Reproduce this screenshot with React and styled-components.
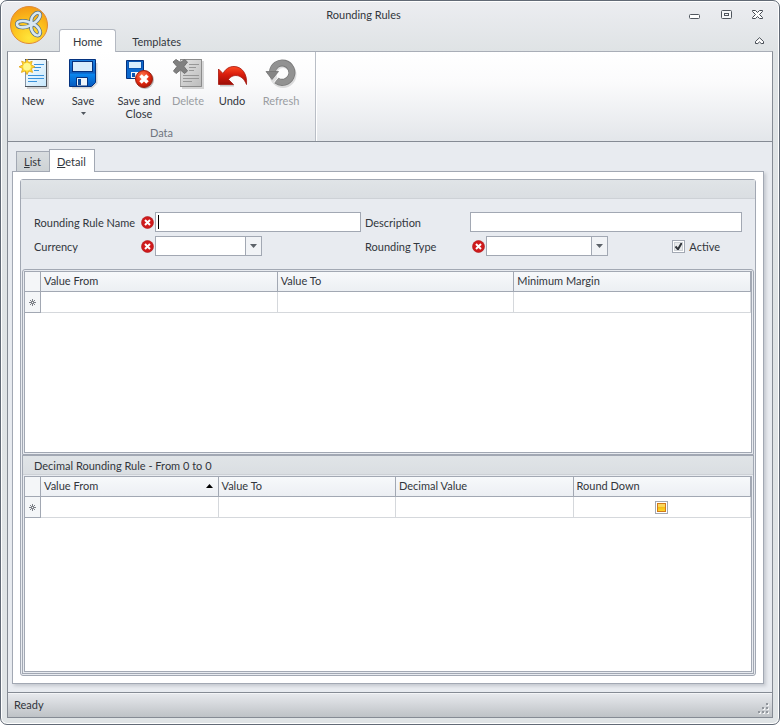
import React from 'react';
import styled, { createGlobalStyle } from 'styled-components';

const line = '#a2a8b3';
const softLine = '#d5d8dc';
const panel = '#e8ebf0';

const GlobalStyle = createGlobalStyle`
  * {
    box-sizing: border-box;
  }
  body {
    margin: 0;
    background: #fff;
    font-family: Lato, 'Open Sans', sans-serif;
    font-size: 11px;
    line-height: 13px;
    color: #32363c;
  }
  button, input, select {
    font: inherit;
    color: inherit;
  }
`;

const Window = styled.div`
  display: flex;
  flex-direction: column;
  min-height: 100vh;
  padding: 0 6px 6px 6px;
  border: 1px solid #626a76;
  border-radius: 7px;
  background: linear-gradient(#ecedf1, #dfe3e5 50px, #e0e4e6);
  box-shadow: inset 0 0 0 1px #fff;
`;

const Header = styled.header`
  position: relative;
  height: 50px;
`;

const TitleRow = styled.div`
  display: flex;
  align-items: center;
  height: 27px;
  padding-left: 53px;
`;

const Title = styled.h1`
  flex: 1;
  margin: 0;
  font-size: 11px;
  font-weight: 400;
  text-align: center;
`;

const WindowButtons = styled.div`
  display: flex;
  justify-content: space-between;
  width: 74px;
  margin: 0 10px 0 22px;
`;

const IconButton = styled.button`
  display: flex;
  padding: 0;
  border: 0;
  background: none;
`;

const AppButton = styled(IconButton)`
  position: absolute;
  top: 3px;
  left: 2px;
`;

const RibbonTabs = styled.nav`
  display: flex;
  align-items: center;
  height: 23px;
  margin-top: 1px;
  padding: 0 9px 0 52px;
`;

const RibbonTab = styled.button`
  position: relative;
  z-index: 1;
  height: 23px;
  padding: 0 13px;
  border: 1px solid ${props => (props.$active ? '#b4b9c2' : 'transparent')};
  border-bottom: 0;
  border-radius: 3px 3px 0 0;
  background: ${props => (props.$active ? '#fff' : 'none')};
  margin-right: 2px;
`;

const Collapse = styled(IconButton)`
  margin-left: auto;
`;

const Client = styled.div`
  flex: 1;
  display: flex;
  flex-direction: column;
  border: 1px solid #858b94;
  border-top-color: #a9aeb7;
  background: ${panel};
`;

const Ribbon = styled.div`
  display: flex;
  height: 90px;
  border-bottom: 1px solid #858b94;
  background: linear-gradient(#fff, #fbfbfc 30px, #e3e6ea);
`;

const RibbonGroup = styled.section`
  display: flex;
  flex-direction: column;
  justify-content: space-between;
  padding: 5px 11px 2px 0;
  border-right: 1px solid #b9bec6;
  box-shadow: 1px 0 0 #fff;
`;

const RibbonItems = styled.div`
  display: flex;
  align-items: flex-start;
`;

const GroupTitle = styled.div`
  padding-left: 11px;
  color: #6f7580;
  text-align: center;
`;

const RibbonButton = styled.button`
  display: flex;
  flex-direction: column;
  align-items: center;
  width: ${props => props.$width}px;
  padding: 0;
  border: 0;
  background: none;
  white-space: nowrap;

  svg {
    flex: none;
  }
  span {
    margin-top: 5px;
  }
  &:disabled {
    color: #9a9da2;
  }
`;

const Content = styled.main`
  flex: 1;
  display: flex;
  flex-direction: column;
  padding: 7px 8px 8px 4px;
`;

const Tabs = styled.div`
  display: flex;
  align-items: flex-end;
  padding-left: 4px;
`;

const Tab = styled.button`
  height: ${props => (props.$active ? 23 : 20)}px;
  padding: 0 8px 0 7px;
  margin: 0 0 ${props => (props.$active ? -1 : 0)}px ${props => (props.$active ? -1 : 0)}px;
  border: 1px solid ${line};
  border-bottom: 0;
  background: ${props => (props.$active ? '#fff' : 'linear-gradient(#d9dde0, #cdd2d5)')};
  position: relative;
`;

const TabPage = styled.div`
  flex: 1;
  display: flex;
  padding: 7px;
  border: 1px solid ${line};
  background: #fff;
  box-shadow: 2px 2px 3px rgba(90, 98, 112, 0.25);
`;

const Group = styled.div`
  flex: 1;
  display: flex;
  flex-direction: column;
  min-width: 0;
  padding-bottom: 1px;
  border: 1px solid ${line};
  border-radius: 3px;
  background: ${panel};
`;

const Caption = styled.div`
  height: 19px;
  padding: 3px 11px;
  border-bottom: 1px solid #cdd1d6;
  background: linear-gradient(#e0e4e7, #dadee2);
`;

const Fields = styled.form`
  display: grid;
  grid-template-columns: 106px minmax(0, 13fr) 109px minmax(0, 16fr);
  grid-auto-rows: 20px;
  row-gap: 4px;
  align-items: center;
  padding: 13px;
`;

const Label = styled.label`
  padding-left: ${props => (props.$second ? 4 : 0)}px;
  white-space: nowrap;
`;

const Field = styled.div`
  display: flex;
  align-items: center;
  gap: 1px;
  padding-left: ${props => (props.$inset ? 1 : 0)}px;
`;

const TextBox = styled.input`
  flex: 1;
  min-width: 0;
  height: 20px;
  padding: 0 3px;
  border: 1px solid ${line};
  border-radius: 0;
  outline: 0;
  background: ${props =>
    props.$current ? 'linear-gradient(#000, #000) 2px 2px / 1px 14px no-repeat #fff' : '#fff'};
`;

const Combo = styled.div`
  position: relative;
  width: ${props => props.$width}px;

  select {
    display: block;
    width: 100%;
    height: 20px;
    padding: 0 18px 0 3px;
    border: 1px solid ${line};
    border-radius: 0;
    background: #fff;
    appearance: none;
  }
  svg {
    position: absolute;
    top: 1px;
    right: 1px;
    pointer-events: none;
  }
`;

const CheckLabel = styled.label`
  display: flex;
  align-items: center;
  gap: 4px;
  margin: 0 22px 0 auto;
`;

const CheckBox = styled.input`
  appearance: none;
  display: block;
  width: 13px;
  height: 13px;
  margin: 0;
  border: 1px solid ${line};
  box-shadow: inset 0 0 0 1px #fff, inset 0 0 0 2px #ccd0d5;
  background: #e9ebed;

  &:checked {
    background: url("data:image/svg+xml,%3Csvg xmlns='http://www.w3.org/2000/svg' width='11' height='11'%3E%3Cpath d='M2.5 5.5L5 8.3L8.8 1.8' fill='none' stroke='%2333373c' stroke-width='2'/%3E%3C/svg%3E") #e9ebed;
  }
  &:indeterminate {
    border-color: ${line};
    background: linear-gradient(#fbd75d 40%, #f5bf16 50%, #ffe23a);
    box-shadow: inset 0 0 0 1px #fff, inset 0 0 0 2px #cf7a1c;
  }
`;

const Section = styled.section`
  flex: ${props => props.$grow} 0 0;
  display: flex;
  flex-direction: column;
  margin: 0 1px;
  border: 1px solid ${line};
  border-radius: ${props => (props.$first ? '3px 3px 0 0' : 0)};
`;

const GridBox = styled.div`
  flex: 1;
  margin: 1px;
  border: 1px solid ${line};
  background: #fff;
`;

const Table = styled.table`
  width: 100%;
  table-layout: fixed;
  border-collapse: separate;
  border-spacing: 0;

  th, td {
    padding: 0 3px;
    border-right: 1px solid ${softLine};
    border-bottom: 1px solid ${softLine};
    font-weight: 400;
    text-align: left;
  }
  thead th, thead td {
    height: 20px;
    border-color: ${line};
    background: linear-gradient(#f7f9fb, #eceff3);
  }
  th:not(:last-child) {
    width: calc((100% - 18px) / ${props => props.$count});
  }
  td {
    height: 21px;
  }
  td:first-child {
    width: 16px;
    padding: 0;
    border-color: ${line};
    background: #f4f6f8;
  }
  tbody svg, tbody input {
    display: block;
    margin: 0 auto;
  }
`;

const HeadCell = styled.div`
  display: flex;
  align-items: center;
  justify-content: space-between;
  padding: 0 2px 2px 0;
`;

const StatusBar = styled.footer`
  display: flex;
  align-items: center;
  justify-content: space-between;
  height: 25px;
  padding: 0 2px 1px 6px;
  border-top: 1px solid #858b94;
  background: linear-gradient(#e8eaee, #bec2c6);
  box-shadow: inset 0 1px 0 #f4f5f7;

  svg {
    align-self: flex-end;
  }
`;

const Logo = () => (
  <svg width="40" height="42" viewBox="0 0 40 42">
    <defs>
      <radialGradient id="logoFill" cx="50%" cy="85%" r="85%">
        <stop offset="0" stopColor="#ffe53a" />
        <stop offset="0.5" stopColor="#fdc51f" />
        <stop offset="1" stopColor="#f39a14" />
      </radialGradient>
    </defs>
    <circle cx="20" cy="21" r="18.5" fill="url(#logoFill)" stroke="#e08a35" />
    <g fill="none" strokeLinejoin="round">
      <g stroke="#536f83" strokeWidth="4">
        <path d="M23 20C17 15 8 17 8 20C8 24 17 25 23 20Z" />
        <path d="M23 20C20 13 27 8 30 9C33 11 29 18 23 20Z" />
        <path d="M23 20C29 21 33 28 30 31C27 33 20 27 23 20Z" />
      </g>
      <g stroke="#d8e7f1" strokeWidth="2.6">
        <path d="M23 20C17 15 8 17 8 20C8 24 17 25 23 20Z" />
        <path d="M23 20C20 13 27 8 30 9C33 11 29 18 23 20Z" />
        <path d="M23 20C29 21 33 28 30 31C27 33 20 27 23 20Z" />
      </g>
    </g>
  </svg>
);

const MinimizeIcon = () => (
  <svg width="11" height="11" fill="#fff" stroke="#50565e">
    <rect x="0.5" y="5.5" width="10" height="4" rx="1" />
  </svg>
);

const MaximizeIcon = () => (
  <svg width="11" height="11" fill="#f7f8f9" stroke="#50565e">
    <rect x="0.5" y="1.5" width="10" height="8" rx="1" />
    <rect x="3.5" y="4.5" width="4" height="2" />
  </svg>
);

const CloseIcon = () => (
  <svg width="11" height="11" fill="#fff" stroke="#454b53">
    <path d="M0.5 1.5H3.5L5.5 3.5L7.5 1.5H10.5V2.5L7.5 5.5L10.5 8.5V9.5H7.5L5.5 7.5L3.5 9.5H0.5V8.5L3.5 5.5L0.5 2.5Z" />
  </svg>
);

const CollapseIcon = () => (
  <svg width="9" height="8" fill="#fff" stroke="#454b53">
    <path d="M4.5 0.7L8.5 4.5V6.5H6.2L4.5 4.9L2.8 6.5H0.5V4.5Z" />
  </svg>
);

const Page = ({ id, from, to, stroke, edge, bars }) => (
  <>
    <defs>
      <linearGradient id={id} x1="0" y1="0" x2="1" y2="1">
        <stop offset="0" stopColor={from} />
        <stop offset="1" stopColor={to} />
      </linearGradient>
    </defs>
    <path d="M10 31H31V4" fill="none" stroke="#000" strokeOpacity="0.15" strokeWidth="2" />
    <rect x="8.5" y="2.5" width="21" height="27" fill={`url(#${id})`} stroke={edge} />
    <path d="M8 2.500H29.500V29.500H8" fill="none" stroke={stroke} />
    <path d="M17 7.5H27M17 10.5H24M17 13.5H22M11 18.5H27M11 21.5H27M11 24.5H20" stroke={bars} />
  </>
);

const NewIcon = () => (
  <svg width="32" height="32">
    <Page id="newPage" from="#ffffff" to="#c5e6fb" stroke="#4b525b" edge="#8494a5" bars="#3a93dc" />
    <path
      d="M10 2L11.6 5.6L15.2 4.2L14 7.8L18 9.8L14.3 11.5L15.6 15.4L11.8 14L10 17.6L8.2 14L4.4 15.4L5.7 11.5L2 9.8L6 7.8L4.6 4.2L8.4 5.6Z"
      fill="#ffd92e"
      stroke="#e2a51a"
      strokeWidth="0.8"
    />
    <circle cx="10" cy="9.8" r="3.8" fill="#fff88c" />
  </svg>
);

const SaveIcon = () => (
  <svg width="32" height="32">
    <defs>
      <linearGradient id="diskFill" x1="0" y1="0" x2="0" y2="1">
        <stop offset="0" stopColor="#1b7fe0" />
        <stop offset="0.5" stopColor="#0e62c4" />
        <stop offset="0.55" stopColor="#0a86ee" />
        <stop offset="1" stopColor="#0759bd" />
      </linearGradient>
    </defs>
    <path d="M5 30.5H25L29.5 26V6" fill="none" stroke="#000" strokeOpacity="0.15" strokeWidth="2" />
    <path d="M2.5 2.5H28.5V25.5L24.5 29.5H2.5Z" fill="url(#diskFill)" stroke="#04327f" />
    <rect x="5.5" y="4.5" width="20" height="10" fill="#d9edfc" stroke="#04327f" />
    <path d="M9.5 29V20.5H20.5V29Z" fill="#eef5fb" stroke="#04327f" />
    <rect x="11" y="22" width="3" height="6" fill="#0b4a9c" />
  </svg>
);

const SaveCloseIcon = () => (
  <svg width="32" height="32">
    <defs>
      <radialGradient id="closeBall" cx="40%" cy="30%" r="75%">
        <stop offset="0" stopColor="#ff7a50" />
        <stop offset="0.6" stopColor="#e2280f" />
        <stop offset="1" stopColor="#a31204" />
      </radialGradient>
    </defs>
    <path d="M3.5 3.5H20.5V21.5H3.5Z" fill="#0c69cf" stroke="#04327f" />
    <rect x="5.5" y="4.5" width="13" height="7" fill="#d9edfc" stroke="#0a55b0" />
    <rect x="8" y="15" width="9" height="6" fill="#eef5fb" />
    <rect x="9" y="16" width="3" height="4" fill="#0b55b0" />
    <circle cx="22" cy="23" r="9" fill="#000" fillOpacity="0.25" />
    <circle cx="21" cy="22" r="8.5" fill="url(#closeBall)" stroke="#9c2112" />
    <path d="M17.5 18.5L24.5 25.5M24.5 18.5L17.5 25.5" stroke="#fff" strokeWidth="3.5" />
  </svg>
);

const DeleteIcon = () => (
  <svg width="32" height="32">
    <Page id="deletePage" from="#e3e3e3" to="#bcbcbc" stroke="#8c8c8c" edge="#a6a6a6" bars="#979797" />
    <path
      d="M1 5L4 2.5L8.5 5.5L12.5 2.5L15.5 5L12 9.5L15.5 14L12.5 16.5L8.5 13L4 16.5L1.5 14L5 9.5Z"
      fill="#808080"
      stroke="#727272"
    />
  </svg>
);

const UndoIcon = () => (
  <svg width="32" height="32">
    <defs>
      <linearGradient id="undoFill" x1="0" y1="0" x2="0" y2="1">
        <stop offset="0" stopColor="#ff4a22" />
        <stop offset="0.45" stopColor="#d81d0d" />
        <stop offset="1" stopColor="#9c0d06" />
      </linearGradient>
    </defs>
    <path d="M4 28.5H18" stroke="#000" strokeOpacity="0.2" strokeWidth="2" />
    <path
      d="M2.5 12V27.5H17.5L12.5 22.5C16 17 26 16 30.5 27.5C31.5 17 26 9.5 18 9.5C13 9.5 9.5 12 7 16.5Z"
      fill="url(#undoFill)"
      stroke="#a3150c"
      strokeWidth="0.8"
    />
  </svg>
);

const RefreshIcon = () => (
  <svg width="32" height="32" fill="none">
    <circle cx="18" cy="17.5" r="10" stroke="#000" strokeOpacity="0.12" strokeWidth="7" />
    <path d="M7.5 15A9.7 9.7 0 1 1 11.5 23.5" stroke="#7a7a7a" strokeWidth="7" />
    <path d="M7.5 15A9.7 9.7 0 1 1 11.5 23.5" stroke="#929292" strokeWidth="5.4" />
    <path d="M1 14.5H13.5L7 22.5Z" fill="#858585" stroke="#747474" strokeWidth="0.8" />
    <path d="M8.5 25.5L14 20" stroke="#eee" />
  </svg>
);

const ErrorIcon = () => (
  <svg width="14" height="13" style={{ flex: 'none' }}>
    <circle cx="7.5" cy="6.5" r="6" fill="#cf1a1c" stroke="#b01618" strokeWidth="0.6" />
    <path d="M5 4L10 9M10 4L5 9" stroke="#fff" strokeWidth="2" />
  </svg>
);

const DropIcon = () => (
  <svg width="16" height="18">
    <rect width="16" height="18" fill="#f1f3f6" />
    <path d="M0.5 0V18" stroke={line} />
    <path d="M5 7H12L8.5 11Z" fill="#5c6269" />
  </svg>
);

const NewRowIcon = () => (
  <svg width="9" height="9" stroke="#6f747b" strokeWidth="0.9">
    <path d="M4.5 1V8M1 4.5H8M2 2L7 7M7 2L2 7" />
    <circle cx="4.5" cy="4.5" r="1" fill="#fff" />
  </svg>
);

const GripIcon = () => (
  <svg width="12" height="14">
    {[[8, 1], [4, 5], [8, 5], [0, 9], [4, 9], [8, 9]].map(([x, y]) => (
      <g key={`${x}-${y}`}>
        <rect x={x + 1} y={y + 1} width="2" height="2" fill="#f3f4f5" />
        <rect x={x} y={y} width="2" height="2" fill="#91969c" />
      </g>
    ))}
  </svg>
);

const ComboBox = ({ id, width }) => (
  <Combo $width={width}>
    <select id={id} defaultValue="">
      <option value="" aria-label="None" />
    </select>
    <DropIcon />
  </Combo>
);

const Grid = ({ columns, sorted, check }) => (
  <GridBox>
    <Table $count={columns.length}>
      <thead>
        <tr>
          <td />
          {columns.map(name => (
            <th key={name} scope="col">
              <HeadCell>
                {name}
                {name === sorted && (
                  <svg width="7" height="4">
                    <path d="M0 4L3.5 0L7 4Z" />
                  </svg>
                )}
              </HeadCell>
            </th>
          ))}
        </tr>
      </thead>
      <tbody>
        <tr>
          <td><NewRowIcon /></td>
          {columns.map(name => (
            <td key={name}>
              {name === check && (
                <CheckBox
                  type="checkbox"
                  aria-label={name}
                  ref={box => {
                    if (box) box.indeterminate = true;
                  }}
                />
              )}
            </td>
          ))}
        </tr>
      </tbody>
    </Table>
  </GridBox>
);

const App = () => (
  <>
    <GlobalStyle />
    <Window>
      <Header>
        <AppButton aria-label="Menu"><Logo /></AppButton>
        <TitleRow>
          <Title>Rounding Rules</Title>
          <WindowButtons>
            <IconButton aria-label="Minimize"><MinimizeIcon /></IconButton>
            <IconButton aria-label="Maximize"><MaximizeIcon /></IconButton>
            <IconButton aria-label="Close"><CloseIcon /></IconButton>
          </WindowButtons>
        </TitleRow>
        <RibbonTabs>
          <RibbonTab $active>Home</RibbonTab>
          <RibbonTab>Templates</RibbonTab>
          <Collapse aria-label="Collapse ribbon"><CollapseIcon /></Collapse>
        </RibbonTabs>
      </Header>

      <Client>
        <Ribbon>
          <RibbonGroup>
            <RibbonItems>
              <RibbonButton $width={50}><NewIcon /><span>New</span></RibbonButton>
              <RibbonButton $width={50}>
                <SaveIcon />
                <span>Save</span>
                <svg width="5" height="10"><path d="M0 5H5L2.5 8Z" fill="#50565e" /></svg>
              </RibbonButton>
              <RibbonButton $width={62}>
                <SaveCloseIcon />
                <span>Save and<br />Close</span>
              </RibbonButton>
              <RibbonButton $width={36} disabled><DeleteIcon /><span>Delete</span></RibbonButton>
              <RibbonButton $width={52}><UndoIcon /><span>Undo</span></RibbonButton>
              <RibbonButton $width={46} disabled><RefreshIcon /><span>Refresh</span></RibbonButton>
            </RibbonItems>
            <GroupTitle>Data</GroupTitle>
          </RibbonGroup>
        </Ribbon>

        <Content>
          <Tabs>
            <Tab><u>L</u>ist</Tab>
            <Tab $active><u>D</u>etail</Tab>
          </Tabs>
          <TabPage>
            <Group>
              <Caption />
              <Fields>
                <Label htmlFor="ruleName">Rounding Rule Name</Label>
                <Field>
                  <ErrorIcon />
                  <TextBox id="ruleName" type="text" $current />
                </Field>
                <Label htmlFor="description" $second>Description</Label>
                <Field>
                  <TextBox id="description" type="text" />
                </Field>
                <Label htmlFor="currency">Currency</Label>
                <Field>
                  <ErrorIcon />
                  <ComboBox id="currency" width={107} />
                </Field>
                <Label htmlFor="roundingType" $second>Rounding Type</Label>
                <Field $inset>
                  <ErrorIcon />
                  <ComboBox id="roundingType" width={122} />
                  <CheckLabel>
                    <CheckBox type="checkbox" defaultChecked />
                    Active
                  </CheckLabel>
                </Field>
              </Fields>
              <Section $grow={17} $first>
                <Grid columns={['Value From', 'Value To', 'Minimum Margin']} />
              </Section>
              <Section $grow={20}>
                <Caption>Decimal Rounding Rule - From 0 to 0</Caption>
                <Grid
                  columns={['Value From', 'Value To', 'Decimal Value', 'Round Down']}
                  sorted="Value From"
                  check="Round Down"
                />
              </Section>
            </Group>
          </TabPage>
        </Content>

        <StatusBar>
          Ready
          <GripIcon />
        </StatusBar>
      </Client>
    </Window>
  </>
);

export default App;
